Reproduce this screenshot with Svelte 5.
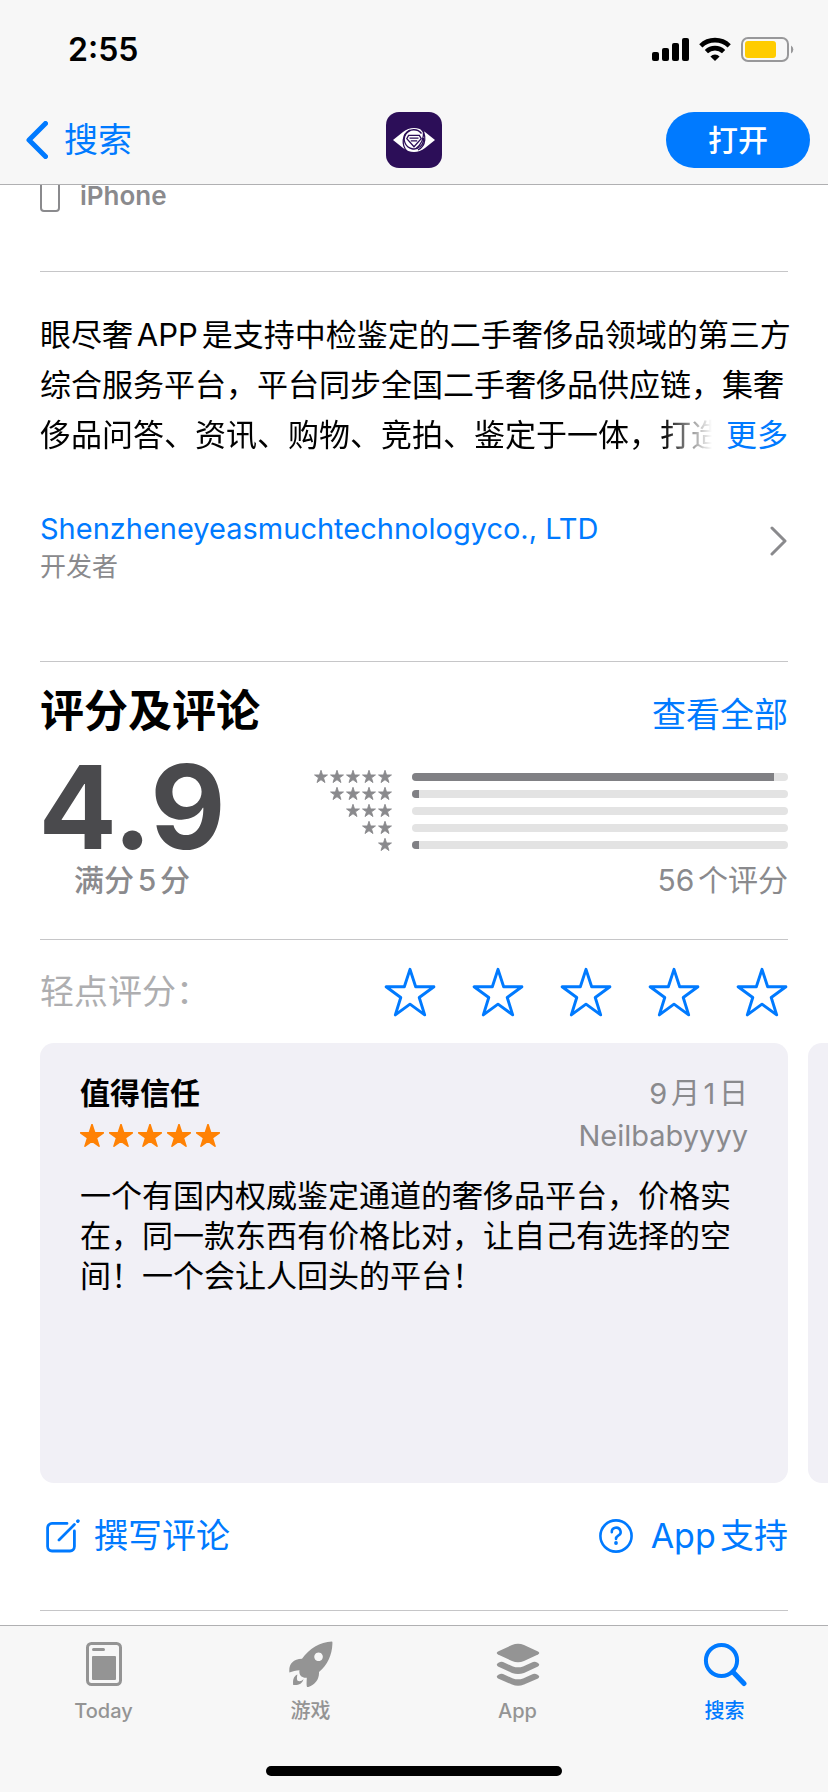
<script lang="ts">
  interface RatingRow {
    stars: number;
    percent: number;
  }

  const starPoints =
    "12,0.5 14.7,8.8 23.4,8.8 16.4,13.9 19,22.2 12,17.1 5,22.2 7.6,13.9 0.6,8.8 9.3,8.8";

  const distribution: RatingRow[] = [
    { stars: 5, percent: 96.4 },
    { stars: 4, percent: 1.8 },
    { stars: 3, percent: 0 },
    { stars: 2, percent: 0 },
    { stars: 1, percent: 1.8 },
  ];

  const tabs = [
    { id: "today", label: "Today" },
    { id: "games", label: "游戏" },
    { id: "apps", label: "App" },
    { id: "search", label: "搜索" },
  ];

  let activeTab = $state("search");
  let myRating = $state(0);
</script>

<div class="screen">
  <header class="top">
    <div class="status-bar">
      <span class="time">2:55</span>
      <div class="status-icons">
        <svg width="37" height="23" viewBox="0 0 37 23">
          <rect x="0" y="14" width="7" height="9" rx="2" />
          <rect x="10" y="10" width="7" height="13" rx="2" />
          <rect x="20" y="5" width="7" height="18" rx="2" />
          <rect x="30" y="0" width="7" height="23" rx="2" />
        </svg>
        <svg width="32" height="24" viewBox="0 0 32 24">
          <g fill="none" stroke="#000" stroke-width="4.6">
            <path d="M1.8 8.8 A20.5 20.5 0 0 1 30.2 8.8" />
            <path d="M7.4 14.6 A12.4 12.4 0 0 1 24.6 14.6" />
          </g>
          <path d="M16 24 L11.4 19.4 A6.8 6.8 0 0 1 20.6 19.4 Z" />
        </svg>
        <svg width="53" height="25" viewBox="0 0 53 25">
          <rect
            x="1"
            y="1"
            width="46"
            height="23"
            rx="6"
            fill="none"
            stroke="#98989a"
            stroke-width="2"
          />
          <rect x="4" y="4" width="31" height="17" rx="3" fill="#ffcc00" />
          <path d="M50 8.5 A4.6 4.6 0 0 1 50 16.5 Z" fill="#98989a" />
        </svg>
      </div>
    </div>

    <nav class="nav-bar">
      <a class="back" href="#search">
        <svg width="22" height="38" viewBox="0 0 22 38">
          <path
            d="M19.5 2.5 L3 19 L19.5 35.5"
            fill="none"
            stroke="currentColor"
            stroke-width="5"
            stroke-linecap="round"
            stroke-linejoin="round"
          />
        </svg>
        搜索
      </a>

      <svg class="app-icon" width="56" height="56" viewBox="0 0 56 56">
        <rect width="56" height="56" rx="13" fill="#2c0e58" />
        <path
          d="M7 28 L17 20 C20.5 17.2 24 16 28 16 C32 16 35.500 17.2 39 20 L49 28 L39 36 C35.500 38.8 32 40 28 40 C24 40 20.5 38.8 17 36 Z"
          fill="#fff"
        />
        <g fill="none" stroke="#2c0e58" stroke-width="1.3">
          <path d="M21 39 C15.500 34 15.500 22 24 18.200" />
          <path d="M35 17 C40.500 22 40.500 34 32 37.800" />
          <path d="M35.500 21.500 A9.600 9.600 0 1 0 37.400 26" />
          <path d="M37.500 19 C38 26 36 32 30 36.500" />
          <path d="M22.6 23.400 H33.400 L35.200 26.600 L28 34.800 L20.8 26.600 Z" />
          <path d="M23.500 26.200 H32.500 M24.8 28.800 H31.200" />
        </g>
      </svg>

      <button class="open-btn">打开</button>
    </nav>
  </header>

  <main class="content">
    <!-- Scrolled a little way under the nav bar -->
    <div class="scrolled">
      <div class="device">
        <svg width="20" height="38" viewBox="0 0 20 38">
          <rect
            x="1"
            y="1"
            width="18"
            height="36"
            rx="3"
            fill="none"
            stroke="currentColor"
            stroke-width="2"
          />
        </svg>
        <span>iPhone</span>
      </div>

      <section class="about">
        <div class="description">
          <span class="line">眼尽奢APP是支持中检鉴定的二手奢侈品领域的第三方</span>
          <span class="line">综合服务平台，平台同步全国二手奢侈品供应链，集奢</span>
          <div class="last-line">
            <span class="line fade">侈品问答、资讯、购物、竞拍、鉴定于一体，打造</span>
            <button class="more">更多</button>
          </div>
        </div>

        <a class="developer" href="#developer">
          <span class="developer-text">
            <span class="developer-name">Shenzheneyeasmuchtechnologyco., LTD</span>
            <span class="developer-role">开发者</span>
          </span>
          <svg width="18" height="30" viewBox="0 0 18 30">
            <path
              d="M2 2 L15 15 L2 28"
              fill="none"
              stroke="#8a8a8d"
              stroke-width="3"
              stroke-linecap="round"
              stroke-linejoin="round"
            />
          </svg>
        </a>
      </section>

      <section class="ratings">
        <div class="section-head">
          <h2>评分及评论</h2>
          <a href="#all">查看全部</a>
        </div>

        <div class="summary">
          <div class="score">
            <strong>4.9</strong>
            <span>满分5分</span>
          </div>
          <div class="chart">
            {#each distribution as row}
              <div class="chart-row">
                <span class="mini-stars">
                  {#each Array(row.stars) as _}
                    <svg width="14" height="13" viewBox="0 0 24 23">
                      <polygon
                        points={starPoints}
                        stroke="currentColor"
                        stroke-width="1.6"
                      />
                    </svg>
                  {/each}
                </span>
                <div class="track">
                  <div class="fill" style="width: {row.percent}%"></div>
                </div>
              </div>
            {/each}
            <span class="count">56个评分</span>
          </div>
        </div>
      </section>

      <section class="reviews">
        <div class="tap-row">
          <span>轻点评分：</span>
          <div class="tap-stars">
            {#each [1, 2, 3, 4, 5] as n}
              <button aria-label="{n} 星" onclick={() => (myRating = n)}>
                <svg width="52" height="50" viewBox="-0.4 -0.6 24.8 23.8">
                  <polygon
                    points={starPoints}
                    fill={n <= myRating ? "currentColor" : "none"}
                    stroke="currentColor"
                    stroke-width="1.4"
                    stroke-linejoin="round"
                  />
                </svg>
              </button>
            {/each}
          </div>
        </div>

        <div class="carousel">
          <article class="card">
            <div class="card-row">
              <h3>值得信任</h3>
              <span class="meta">9月1日</span>
            </div>
            <div class="card-row">
              <span class="card-stars">
                {#each Array(5) as _}
                  <svg width="24" height="23" viewBox="0 0 24 23">
                    <polygon
                      points={starPoints}
                      stroke="currentColor"
                      stroke-width="1.6"
                      stroke-linejoin="round"
                    />
                  </svg>
                {/each}
              </span>
              <span class="meta">Neilbabyyyy</span>
            </div>
            <p>
              一个有国内权威鉴定通道的奢侈品平台，价格实在，同一款东西有价格比对，让自己有选择的空间！一个会让人回头的平台！
            </p>
          </article>
          <article class="card"></article>
        </div>

        <div class="actions">
          <button class="action">
            <svg width="34" height="34" viewBox="0 0 34 34">
              <g
                fill="none"
                stroke="currentColor"
                stroke-width="2.8"
                stroke-linecap="round"
              >
                <path
                  d="M21 4.4 H6 A4.4 4.4 0 0 0 1.6 8.8 V27.6 A4.4 4.4 0 0 0 6 32 H24 A4.4 4.4 0 0 0 28.4 27.6 V12"
                />
                <path d="M13 21 L28.4 5.6" />
                <path d="M31.8 2.2 L32 2" stroke-width="3.4" />
              </g>
            </svg>
            撰写评论
          </button>
          <button class="action support">
            <svg width="34" height="34" viewBox="0 0 34 34">
              <g
                fill="none"
                stroke="currentColor"
                stroke-width="2.6"
                stroke-linecap="round"
              >
                <circle cx="17" cy="17" r="15.6" />
                <path
                  d="M12.8 13.2 A4.4 4.2 0 1 1 19.2 16.6 C17.6 17.6 17 18.2 17 20"
                />
              </g>
              <circle cx="17" cy="24" r="1.9" fill="currentColor" />
            </svg>
            App支持
          </button>
        </div>
      </section>
    </div>
  </main>

  <footer class="tab-bar">
    <nav class="tabs">
      {#each tabs as tab}
        <button
          class="tab"
          class:active={activeTab === tab.id}
          onclick={() => (activeTab = tab.id)}
        >
          <svg width="46" height="46" viewBox="0 0 46 46" fill="currentColor">
            {#if tab.id === "today"}
              <rect
                x="6.5"
                y="2.5"
                width="33"
                height="41"
                rx="4"
                fill="none"
                stroke="currentColor"
                stroke-width="3"
              />
              <rect x="11" y="7" width="13" height="3" rx="1.5" />
              <rect x="11" y="15" width="24" height="24" rx="1" />
            {:else if tab.id === "games"}
              <path
                fill-rule="evenodd"
                d="M44 0.6 C44.6 1 44.4 2 44.4 3 C44 14 39.5 24 31 31 C31.4 38 27 44 19.5 46.3 C18.2 45.6 18.6 42 18.8 36.8 C14 37.4 10.5 34 11.5 29.2 C8 29.3 4.5 30.5 1.4 31.5 C0.5 24 4.5 17.8 14 17.8 C21 8 32 1 44 0.6 Z M30.5 11.5 A4.3 4.3 0 1 0 30.6 11.5 Z"
              />
              <path
                d="M9.4 33.4 C5 35.5 4.8 39.5 5.2 44 C10 44.6 14.5 43 15.5 38 C14 40 11.5 40.8 9.6 39.8 C8.6 38 8.9 35.8 9.4 33.4 Z"
              />
            {:else if tab.id === "apps"}
              <path
                d="M3 10.5 L17 4 Q23 1.6 29 4 L43 10.5 Q45.5 12 43 13.6 L29 20 Q23 22.4 17 20 L3 13.6 Q0.5 12 3 10.5 Z"
              />
              <path
                d="M3 22 L5 21 Q6.5 20.4 8 21 L18 25.5 Q23 27.2 28 25.5 L38 21 Q39.5 20.4 41 21 L43 22 Q45.5 23.8 43 25.4 L29 32 Q23 34.2 17 32 L3 25.4 Q0.5 23.8 3 22 Z"
              />
              <path
                d="M3 34 L5 33 Q6.5 32.4 8 33 L18 37.5 Q23 39.2 28 37.5 L38 33 Q39.5 32.4 41 33 L43 34 Q45.5 35.8 43 37.4 L29 43.6 Q23 46 17 43.6 L3 37.4 Q0.5 35.8 3 34 Z"
              />
            {:else}
              <g fill="none" stroke="currentColor" stroke-width="4">
                <circle cx="19.5" cy="19.5" r="15.6" />
                <path d="M31 31 L42 42.5" stroke-width="5" stroke-linecap="round" />
              </g>
            {/if}
          </svg>
          {tab.label}
        </button>
      {/each}
    </nav>
    <div class="home-indicator"></div>
  </footer>
</div>

<style>
  :global(body) {
    background: #fff;
  }

  .screen {
    --blue: #007aff;
    --gray: #8a8a8d;
    --line: #c6c6c8;
    display: flex;
    flex-direction: column;
    height: 100vh;
    overflow: hidden;
    background: #fff;
    color: #000;
    font-family: Inter, "Noto Sans CJK SC", sans-serif;
    font-size: 31px;
    text-autospace: normal;
  }

  button {
    padding: 0;
    border: 0;
    background: none;
    font: inherit;
    color: var(--blue);
    cursor: pointer;
  }

  a {
    color: var(--blue);
    text-decoration: none;
  }

  h2,
  h3,
  p {
    margin: 0;
  }

  svg {
    display: block;
    flex-shrink: 0;
  }

  .top {
    flex-shrink: 0;
    background: #f7f7f7;
    border-bottom: 1px solid #b0b0b2;
  }

  .status-bar {
    display: flex;
    justify-content: space-between;
    align-items: center;
    height: 98px;
    padding: 0 34px 0 68px;
  }

  .time {
    font-size: 32px;
    font-weight: 600;
  }

  .status-icons {
    display: flex;
    align-items: center;
    gap: 10px;
  }

  .nav-bar {
    display: grid;
    grid-template-columns: 1fr auto 1fr;
    align-items: center;
    height: 56px;
    padding: 14px 18px 16px;
  }

  .back {
    display: flex;
    align-items: center;
    gap: 16px;
    padding-left: 8px;
    font-size: 34px;
    line-height: 40px;
  }

  .open-btn {
    justify-self: end;
    width: 144px;
    height: 56px;
    padding-bottom: 4px;
    border-radius: 28px;
    background: var(--blue);
    color: #fff;
    font-size: 30px;
    font-weight: 500;
  }

  .content {
    flex: 1;
    min-height: 0;
    overflow: hidden;
  }

  .scrolled {
    margin-top: -11px;
    padding: 0 40px;
  }

  .device {
    display: flex;
    align-items: flex-end;
    gap: 20px;
    padding-bottom: 59px;
    color: var(--gray);
    font-size: 26px;
    font-weight: 600;
    line-height: 32px;
  }

  .about,
  .ratings,
  .reviews {
    border-top: 1px solid var(--line);
  }

  .about {
    padding: 38px 0 75px;
  }

  .line {
    display: block;
    line-height: 50px;
    white-space: nowrap;
  }

  .last-line {
    display: flex;
    align-items: center;
    gap: 14px;
  }

  .fade {
    flex: 1;
    min-width: 0;
    overflow: hidden;
    mask-image: linear-gradient(to left, transparent, #000 50px);
  }

  .more {
    line-height: 50px;
  }

  .developer {
    display: flex;
    justify-content: space-between;
    align-items: center;
    margin-top: 36px;
  }

  .developer-text {
    display: flex;
    flex-direction: column;
    padding-top: 14px;
    line-height: 38px;
  }

  .developer-name {
    font-size: 29px;
  }

  .developer-role {
    color: var(--gray);
    font-size: 26px;
  }

  .ratings {
    padding: 19px 0 36px;
  }

  .section-head {
    display: flex;
    justify-content: space-between;
    align-items: baseline;
    font-size: 34px;
    line-height: 60px;
  }

  h2 {
    font-size: 44px;
    font-weight: 600;
  }

  .summary {
    display: flex;
    justify-content: space-between;
    padding-top: 13px;
  }

  .score {
    display: flex;
    flex-direction: column;
    align-items: center;
    width: 184px;
    color: var(--gray);
    font-size: 30px;
    font-weight: 500;
    line-height: 46px;
  }

  .score strong {
    color: #4a4a4d;
    font-size: 116px;
    font-weight: 700;
    line-height: 99px;
  }

  .chart {
    display: flex;
    flex-direction: column;
    width: 64%;
    padding-top: 10px;
  }

  .chart-row {
    display: flex;
    justify-content: flex-end;
    align-items: center;
    gap: 20px;
    height: 17px;
  }

  .mini-stars {
    display: flex;
    gap: 2px;
    color: var(--gray);
    fill: currentColor;
  }

  .track {
    width: 376px;
    height: 8px;
    border-radius: 4px;
    background: #e3e3e3;
    overflow: hidden;
  }

  .fill {
    height: 100%;
    background: #808084;
  }

  .count {
    padding-top: 4px;
    color: var(--gray);
    font-size: 30px;
    line-height: 46px;
    text-align: right;
  }

  .tap-row {
    display: flex;
    justify-content: space-between;
    align-items: center;
    height: 103px;
    color: #aeaeb0;
    font-size: 34px;
  }

  .tap-row span {
    padding-bottom: 4px;
  }

  .tap-stars {
    display: flex;
    gap: 36px;
  }

  .carousel {
    display: flex;
    gap: 20px;
  }

  .card {
    flex: 0 0 100%;
    box-sizing: border-box;
    min-height: 440px;
    padding: 26px 40px;
    border-radius: 14px;
    background: #f1f0f6;
  }

  .card-row {
    display: flex;
    justify-content: space-between;
    align-items: center;
    height: 44px;
  }

  h3 {
    font-size: 30px;
    font-weight: 600;
  }

  .meta {
    color: var(--gray);
    font-size: 29px;
  }

  .card-stars {
    display: flex;
    gap: 5px;
    color: #ff8205;
    fill: currentColor;
  }

  .card p {
    padding-top: 19px;
    line-height: 40px;
  }

  .actions {
    display: flex;
    justify-content: space-between;
    align-items: center;
    height: 105px;
    padding-bottom: 22px;
    border-bottom: 1px solid var(--line);
  }

  .action {
    display: flex;
    align-items: center;
    gap: 14px;
    padding-left: 6px;
    font-size: 34px;
    line-height: 40px;
  }

  .support {
    gap: 18px;
  }

  .tab-bar {
    flex-shrink: 0;
    background: #f7f7f7;
    border-top: 1px solid #b0b0b2;
  }

  .tabs {
    display: grid;
    grid-template-columns: repeat(4, 1fr);
    height: 140px;
  }

  .tab {
    display: flex;
    flex-direction: column;
    align-items: center;
    gap: 9px;
    padding-top: 15px;
    color: #949494;
    font-size: 20px;
    font-weight: 500;
    line-height: 30px;
  }

  .active {
    color: var(--blue);
  }

  .home-indicator {
    width: 296px;
    height: 10px;
    margin: 0 auto 16px;
    border-radius: 5px;
    background: #000;
  }
</style>
